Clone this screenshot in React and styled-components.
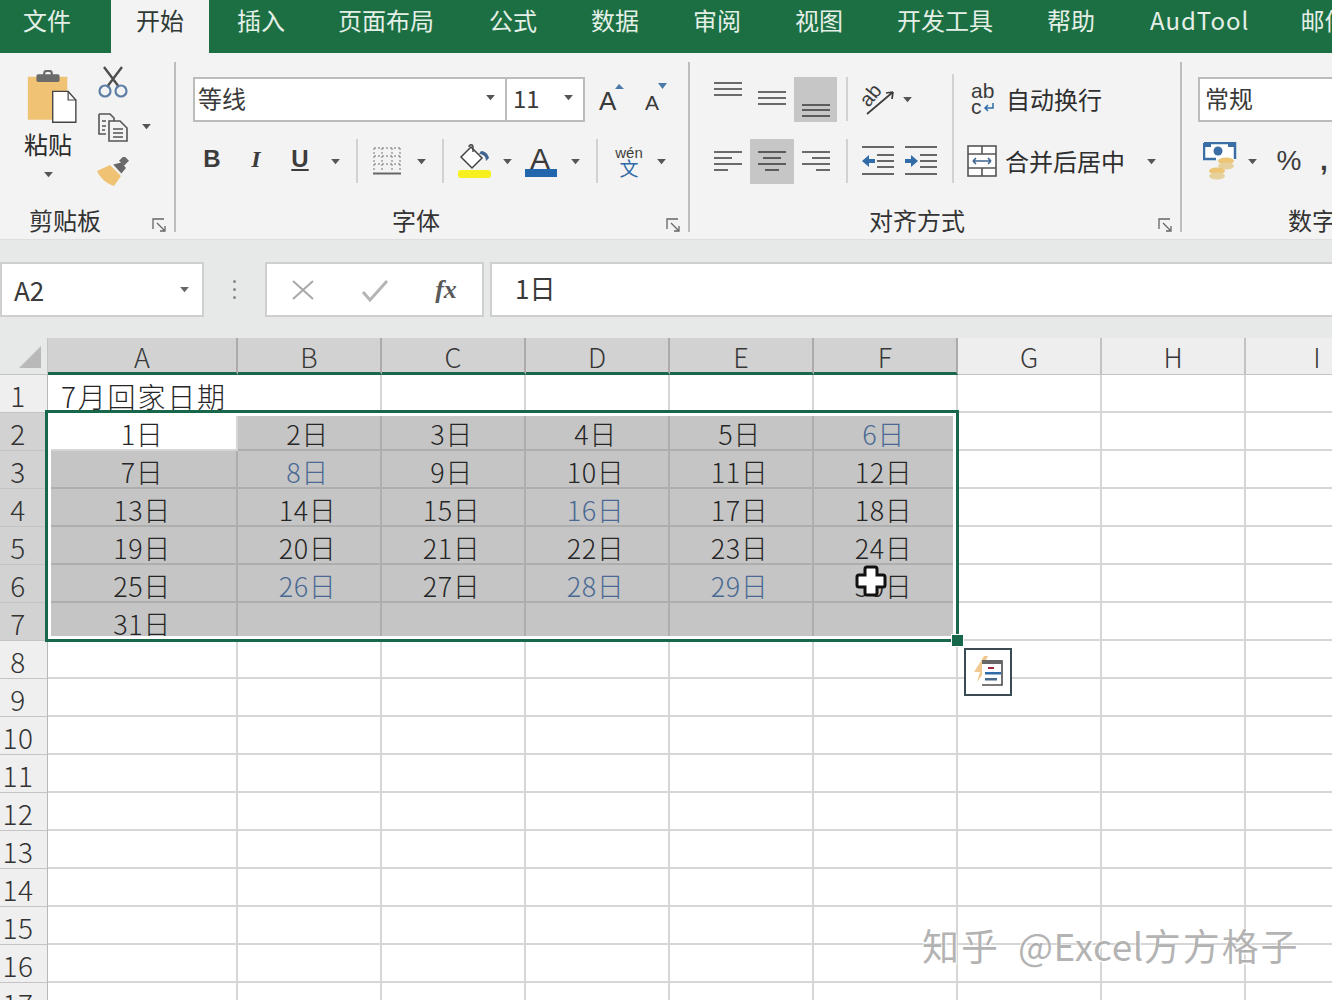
import React from "react";
import styled, { createGlobalStyle } from "styled-components";

const CJK = '"Noto Sans CJK SC", "Noto Sans", sans-serif';

const Global = createGlobalStyle`
  html, body { margin: 0; padding: 0; background: #fff; }
  body { font-family: ${CJK}; color: #2b2b2b; }
`;

const Page = styled.div`
  position: relative; width: 1332px; height: 1000px; overflow: hidden; background: #fff;
`;
const TabBar = styled.div`
  display: flex; height: 53px; background: #1c6f42; margin-left: -2px; gap: 3px; white-space: nowrap;
`;
const Tab = styled.div`
  flex: none; height: ${p => (p.$active ? "54px" : "53px")}; padding: 0 25px 14px; box-sizing: border-box;
  margin-right: ${p => p.$mr || 0}px;
  display: flex; align-items: center;
  font-size: 24px; line-height: 1; letter-spacing: ${p => p.$ls || 0}px;
  color: ${p => (p.$active ? "#2f3a35" : "#e4efe8")};
  background: ${p => (p.$active ? "#f3f3f3" : "transparent")};
`;
const Ribbon = styled.div`
  display: flex; align-items: flex-start; height: 187px; box-sizing: border-box; padding-top: 9px; background: #f3f3f3; overflow: hidden;
  box-shadow: inset 0 -1px 0 #dedede;
`;
const Group = styled.section`
  position: relative; flex: none; width: ${p => p.$w}px; height: 170px; box-sizing: border-box;
  border-right: ${p => (p.$open ? "none" : "2px solid #bdbdbd")};
  display: flex; flex-direction: column;
`;
const GroupBody = styled.div`
  display: flex; height: 122px; padding-left: ${p => p.$pl || 0}px;
`;
const Stack = styled.div`
  display: flex; flex-direction: column; padding-top: 14px; gap: 16px;
`;
const Row = styled.div`
  display: flex; align-items: center; height: 46px; margin-left: ${p => p.$ml || 0}px;
`;
const Slot = styled.div`
  flex: none; width: ${p => p.$w}px; height: ${p => p.$h || 45}px; display: flex; align-items: center; justify-content: center;
  background: ${p => (p.$on ? "#c6c6c6" : "transparent")};
  line-height: 1;
`;
const Divider = styled.div`
  flex: none; width: 2px; height: 44px; background: #d2d2d2; margin: 0 ${p => p.$m || 8}px;
`;
const TallDivider = styled.div`
  flex: none; width: 2px; height: 109px; margin: 12px 0 0 ${p => p.$ml || 0}px; background: #d2d2d2;
`;
const GroupLabel = styled.div`
  margin-top: 20px; height: 32px; line-height: 32px; text-align: center; font-size: 24px; color: #333; padding-right: ${p => p.$pr || 0}px;
  padding-left: ${p => p.$pl || 0}px; white-space: nowrap;
`;
const Launcher = styled.svg`
  position: absolute; right: 8px; top: 156px;
`;
const PasteColumn = styled.div`
  flex: none; width: 102px; padding-top: 8px; display: flex; flex-direction: column; align-items: center;
`;
const PasteLabel = styled.div`
  font-size: 24px; line-height: 28px; margin: 7px 6px 0 0; color: #2b2b2b;
`;
const CaretDrop = styled.div`
  height: 22px; margin: 7px 6px 0 0; display: flex; align-items: center;
`;
const SmallColumn = styled.div`
  flex: none; width: 68px; margin: -3px 0 0 -6px; display: flex; flex-direction: column;
`;
const SmallTool = styled.div`
  height: 46px; display: flex; align-items: center;
`;
const Select = styled.div`
  flex: none; width: ${p => p.$w}px; height: 45px; box-sizing: border-box; display: flex; align-items: center; justify-content: space-between;
  background: #fff; border: 2px solid #bcbcbc; padding: 0 9px 3px ${p => p.$pl || 4}px; font-size: 24px; color: #3a3a3a; line-height: 1;
  margin-left: ${p => p.$ml || 0}px; margin-right: ${p => p.$mr || 0}px;
`;
const FormatMark = styled.span`
  font-size: ${p => p.$size || 24}px; font-weight: ${p => p.$w || 700}; font-style: ${p => (p.$it ? "italic" : "normal")};
  text-decoration: ${p => (p.$ul ? "underline" : "none")}; color: ${p => p.$c || "#3c3c3c"};
  font-family: ${p => (p.$it ? '"Liberation Serif", serif' : '"Liberation Sans", sans-serif')};
  margin-bottom: ${p => p.$mb ?? 4}px;
`;
const ToolText = styled.span`
  font-size: 24px; color: #2f2f2f; white-space: nowrap; line-height: 1;
`;
const ToolRow = styled.div`
  display: flex; align-items: center; height: 46px; padding-left: ${p => p.$pl || 0}px; gap: ${p => p.$g || 0}px;
`;
const Band = styled.div`
  display: flex; align-items: flex-start; height: 98px; box-sizing: border-box; padding-top: 22px; background: #e7e8e8;
`;
const FormulaBox = styled.div`
  flex: none; width: ${p => p.$w}px; height: 55px; box-sizing: border-box; background: #fff; border: 2px solid #cfcfcf;
  margin-left: ${p => p.$ml || 0}px; display: flex; align-items: center; padding: ${p => p.$p || "0"};
  justify-content: ${p => p.$j || "flex-start"};
  font-size: 26px; color: #3a3a3a;
`;
const Dots = styled.div`
  flex: none; width: 3px; height: 3px; border-radius: 50%; background: #8a8a8a;
  box-shadow: 0 -8px 0 #8a8a8a, 0 8px 0 #8a8a8a; margin: 26px 29px 0 29px;
`;
const Sheet = styled.div`
  display: grid; grid-template-columns: 48px 190px repeat(8, 144px);
  grid-template-rows: 37px repeat(17, 38px); height: 662px; overflow: hidden;
  font-family: ${CJK};
`;
const Corner = styled.div`
  background: #e7e8e8; position: relative; border-right: 1px solid #c4c4c4; border-bottom: 1px solid #c4c4c4; box-sizing: border-box;
  display: flex; align-items: flex-end; justify-content: flex-end; padding: 0 6px 6px 0;
`;
const ColHead = styled.div`
  box-sizing: border-box; display: flex; align-items: flex-end; justify-content: center;
  background: ${p => (p.$sel ? "#d2d2d2" : "#eeeeee")};
  border-right: 2px solid ${p => (p.$sel ? "#ababab" : "#c2c2c2")};
  border-bottom: ${p => (p.$sel ? "3px solid #17684a" : "1px solid #c4c4c4")};
  font-size: 27px; line-height: 30px; color: #383838; font-weight: 300; padding-bottom: ${p => (p.$sel ? 0 : 2)}px;
`;
const RowHead = styled.div`
  box-sizing: border-box; display: flex; align-items: flex-end; justify-content: center;
  background: ${p => (p.$sel ? "#d2d2d2" : "#efefef")};
  border-right: 1px solid #b8b8b8; border-bottom: 1px solid #c4c4c4; padding: 0 11px 1px 0;
  font-size: 28px; line-height: 32px; letter-spacing: 0.5px; color: #333; font-weight: 300; overflow: hidden;
`;
const Cell = styled.div`
  box-sizing: border-box; display: flex; align-items: flex-end; justify-content: center; min-width: 0;
  background: ${p => (p.$sel ? "#c5c5c5" : "#fff")};
  border-right: 2px solid ${p => (p.$sel ? "#aeaeae" : "#d6d6d6")};
  border-bottom: 2px solid ${p => (p.$sel ? "#aeaeae" : "#d6d6d6")};
  font-size: 27px; line-height: 30px; letter-spacing: 0.5px; color: ${p => (p.$blue ? "#4a6a94" : "#262626")}; font-weight: 300; white-space: nowrap;
  padding-right: ${p => p.$pr || 0}px;
`;
const TitleCell = styled(Cell)`
  justify-content: flex-start; padding-left: 13px; overflow: visible; border-right-color: transparent; font-size: 28px; letter-spacing: 1.8px;
`;
const SelectionFrame = styled.div`
  position: absolute; left: 45px; top: 410px; width: 914px; height: 232px; box-sizing: border-box;
  border: 3px solid #17684a; box-shadow: inset 0 0 0 3px #fff; pointer-events: none;
`;
const FillHandle = styled.div`
  position: absolute; left: 951px; top: 634px; width: 11px; height: 11px; background: #17684a; border: 1px solid #fff;
`;
const SmartTag = styled.div`
  position: absolute; left: 964px; top: 648px; width: 48px; height: 48px; box-sizing: border-box; background: #fff; border: 2px solid #3c4a52;
  display: flex; align-items: center; justify-content: center;
`;
const CursorMark = styled.svg`
  position: absolute; left: 855px; top: 565px;
`;
const Watermark = styled.div`
  position: absolute; left: 922px; top: 921px; font-size: 37px; line-height: 48px; letter-spacing: 1.9px; word-spacing: 8px; white-space: nowrap;
  color: rgba(150,150,150,.72); text-shadow: 1px 2px 0 rgba(255,255,255,.85), -1px -1px 0 rgba(255,255,255,.5); font-family: ${CJK};
`;
const WatermarkHandle = styled.span`
  letter-spacing: 0.6px;
`;
const PhoneticMark = styled.div`
  display: flex; flex-direction: column; align-items: center; line-height: 1;
  font-family: "Liberation Sans", sans-serif; font-size: 15px; color: #3f3f3f;
  & > b { font-family: ${CJK}; font-weight: 400; font-size: 19px; color: #2e6aa8; margin-top: -2px; }
`;

const Caret = ({ c = "#555" }) => (
  <svg width="11" height="7" viewBox="0 0 12 8"><path d="M1 1h10L6 7z" fill={c} /></svg>
);
const PasteIcon = () => (
  <svg width="60" height="62" viewBox="0 0 60 62">
    <path d="M3 8h46v50H3z" fill="#efc274" />
    <rect x="13" y="5" width="27" height="9" rx="2" fill="#6b6b6b" />
    <rect x="22" y="1" width="9" height="8" rx="3" fill="none" stroke="#6b6b6b" strokeWidth="2.5" />
    <path d="M32 25h18l9 10v26H32z" fill="#fff" stroke="#444" strokeWidth="1.6" />
    <path d="M50 25v10h9" fill="none" stroke="#444" strokeWidth="1.4" />
  </svg>
);
const CutIcon = () => (
  <svg width="30" height="32" viewBox="0 0 30 32">
    <path d="M6 1l15 20M24 1L9 21" stroke="#4e4e4e" strokeWidth="2.4" fill="none" />
    <circle cx="7" cy="25" r="5.5" fill="none" stroke="#5d7ea6" strokeWidth="2.2" />
    <circle cx="23" cy="25" r="5.5" fill="none" stroke="#5d7ea6" strokeWidth="2.2" />
  </svg>
);
const CopyIcon = () => (
  <svg width="32" height="30" viewBox="0 0 32 30" fill="none" stroke="#555" strokeWidth="1.6">
    <path d="M2 2h11l4 4v3M2 2v20h7" />
    <path d="M5 9h4M5 14h4M5 18h3" />
    <path d="M12 9h11l7 7v13H12z" fill="#f3f3f3" />
    <path d="M16 17h10M16 21h10M16 25h10" />
  </svg>
);
const BrushIcon = () => (
  <svg width="32" height="30" viewBox="0 0 32 30">
    <path d="M0 14l13-6 11 11-7 10C10 27 3 21 0 14z" fill="#efc274" />
    <path d="M16 8l8-3 5 5-4 6z" fill="#666" transform="rotate(6 20 10)" />
    <rect x="24" y="0" width="7" height="7" fill="#6b6b6b" transform="rotate(45 27 3)" />
  </svg>
);
const GrowA = () => (
  <svg width="34" height="34" viewBox="0 0 34 34">
    <text x="9" y="28" fontFamily="Liberation Sans" fontSize="26" fill="#3a3a3a">A</text>
    <path d="M25 7l4-5 5 5z" fill="#4a7aa8" />
  </svg>
);
const ShrinkA = () => (
  <svg width="34" height="34" viewBox="0 0 34 34">
    <text x="12" y="28" fontFamily="Liberation Sans" fontSize="21" fill="#3a3a3a">A</text>
    <path d="M25 1h9l-4.500 6z" fill="#4a7aa8" />
  </svg>
);
const BorderIcon = () => (
  <svg width="28" height="28" viewBox="0 0 28 28" fill="none" stroke="#9a9a9a" strokeWidth="1.4" strokeDasharray="2 2">
    <path d="M1 1h26M1 9h26M1 17h26M1 1v24M9 1v24M19 1v24M27 1v24" />
    <path d="M0 26.500h28" stroke="#666" strokeWidth="2" strokeDasharray="none" />
  </svg>
);
const FillIcon = () => (
  <svg width="36" height="34" viewBox="0 0 36 34">
    <path d="M4 13L14 3l11 11-10 10z" fill="#fff" stroke="#444" strokeWidth="1.5" />
    <path d="M12 3c0-3 4-3 4 0v5" fill="none" stroke="#444" strokeWidth="1.4" />
    <path d="M24 7c4 0 7 3 8 7l-3 3c0-5-3-7-7-7z" fill="#3f648f" />
    <rect x="1" y="26" width="33" height="8" rx="3" fill="#f6f01e" />
  </svg>
);
const FontColorIcon = () => (
  <svg width="34" height="32" viewBox="0 0 34 32">
    <text x="6" y="24" fontFamily="Liberation Sans" fontSize="30" fill="#3b3b3b">A</text>
    <rect x="1" y="24" width="32" height="8" fill="#2266ad" />
  </svg>
);
const Lines = ({ w = 28, ys, widths, color = "#6a6a6a", align = "left" }) => (
  <svg width={w} height="45" viewBox={`0 0 ${w} 45`}>
    {ys.map((y, i) => {
      const l = widths ? widths[i] : w;
      const x = align === "left" ? 0 : align === "right" ? w - l : (w - l) / 2;
      return <rect key={y} x={x} y={y} width={l} height="2" fill={color} />;
    })}
  </svg>
);
const OrientIcon = () => (
  <svg width="36" height="34" viewBox="0 0 36 34">
    <text x="1" y="22" transform="rotate(-50 9 16)" fontFamily="Liberation Sans" fontSize="20" fill="#3c3c3c">ab</text>
    <path d="M7 32L33 10M33 10l-7 1M33 10l-1 7" stroke="#3c3c3c" strokeWidth="1.700" fill="none" />
  </svg>
);
const WrapIcon = () => (
  <svg width="26" height="32" viewBox="0 0 26 32">
    <text x="0" y="15" fontFamily="Liberation Sans" fontSize="21" fill="#3c3c3c">ab</text>
    <text x="0" y="31" fontFamily="Liberation Sans" fontSize="21" fill="#3c3c3c">c</text>
    <path d="M22 20v5h-7M17 22l-3 3 3 3" stroke="#2f6ca8" strokeWidth="1.500" fill="none" />
  </svg>
);
const IndentIcon = ({ out }) => (
  <svg width="34" height="30" viewBox="0 0 34 30">
    <path d="M1 1h32M16 9h17M16 15h17M16 21h17M1 28h32" stroke="#666" strokeWidth="1.800" />
    {out
      ? <path d="M1 15l7-6v4h6v4H8v4z" fill="#2f6ca8" />
      : <path d="M14 15l-7-6v4H1v4h6v4z" fill="#2f6ca8" />}
  </svg>
);
const MergeIcon = () => (
  <svg width="30" height="32" viewBox="0 0 30 32" fill="none" stroke="#555" strokeWidth="1.600">
    <rect x="1" y="1" width="28" height="30" fill="#fff" />
    <path d="M1 9h28M1 23h28M15 1v8M15 23v8" />
    <path d="M6 16h18M6 16l3-3M6 16l3 3M24 16l-3-3M24 16l-3 3" stroke="#3f648f" />
  </svg>
);
const MoneyIcon = () => (
  <svg width="34" height="38" viewBox="0 0 34 38">
    <rect x="1" y="1" width="31" height="16" fill="#fff" />
    <path d="M1 1h31v16M1 1v16h12" fill="none" stroke="#3a6ea5" strokeWidth="2.500" />
    <circle cx="15" cy="9" r="4.500" fill="#3a6ea5" />
    <rect x="1" y="0" width="7" height="5" fill="#3a6ea5" />
    <rect x="25" y="0" width="7" height="5" fill="#3a6ea5" />
    <ellipse cx="23" cy="19" rx="8" ry="3.500" fill="#ecc576" />
    <ellipse cx="23" cy="24" rx="8" ry="3.500" fill="#e6d19c" />
    <ellipse cx="14" cy="29" rx="8" ry="3.500" fill="#ecc576" />
    <ellipse cx="14" cy="34" rx="8" ry="3.500" fill="#e6d19c" />
  </svg>
);
const LaunchIcon = () => (
  <Launcher width="14" height="14" viewBox="0 0 14 14" fill="none" stroke="#666" strokeWidth="1.300">
    <path d="M1 11V1h11" />
    <path d="M5 5l7 7M8 13h5V8" />
  </Launcher>
);
const TagIcon = () => (
  <svg width="30" height="32" viewBox="0 0 30 32">
    <path d="M11 0L1 16h6l-3 10 12-16H10l5-10z" fill="#f0c890" />
    <path d="M9 5h20v24H9" fill="#fff" stroke="#4c4c4c" strokeWidth="1.600" />
    <rect x="9" y="4" width="20" height="4" fill="#666" />
    <rect x="15" y="11" width="6" height="2" fill="#a3243b" />
    <rect x="12" y="16" width="16" height="2.500" fill="#2f6ca8" />
    <rect x="12" y="22" width="12" height="2.500" fill="#4a6a8c" />
  </svg>
);

const tabs = [
  { t: "文件", mr: 12 }, { t: "开始", active: true }, { t: "插入" }, { t: "页面布局", mr: 2 }, { t: "公式", mr: 1 }, { t: "数据", mr: 1 },
  { t: "审阅", mr: 1 }, { t: "视图", mr: 1 }, { t: "开发工具", mr: 1 }, { t: "帮助", mr: 2 }, { t: "AudTool", ls: 1, mr: -2 }, { t: "邮件" },
];

const columns = ["A", "B", "C", "D", "E", "F", "G", "H", "I"];
const dayRows = [
  ["1日", "2日", "3日", "4日", "5日", "6日"],
  ["7日", "8日", "9日", "10日", "11日", "12日"],
  ["13日", "14日", "15日", "16日", "17日", "18日"],
  ["19日", "20日", "21日", "22日", "23日", "24日"],
  ["25日", "26日", "27日", "28日", "29日", "30日"],
  ["31日", "", "", "", "", ""],
];
const blue = new Set(["6日", "8日", "16日", "26日", "28日", "29日"]);

const SheetGrid = () => {
  const cells = [<Corner key="corner"><svg width="22" height="22" viewBox="0 0 22 22"><path d="M22 0v22H0z" fill="#b9b9b9" /></svg></Corner>];
  columns.forEach((c, i) => cells.push(<ColHead key={c} $sel={i < 6}>{c}</ColHead>));
  for (let r = 1; r <= 17; r++) {
    cells.push(<RowHead key={`h${r}`} $sel={r >= 2 && r <= 7}>{r}</RowHead>);
    for (let c = 0; c < 9; c++) {
      const key = `${r}-${c}`;
      if (r === 1 && c === 0) {
        cells.push(<TitleCell key={key}>7月回家日期</TitleCell>);
      } else if (r >= 2 && r <= 7 && c < 6) {
        const v = dayRows[r - 2][c];
        cells.push(
          <Cell key={key} $sel={!(r === 2 && c === 0)} $blue={blue.has(v)} $pr={c > 0 ? 3 : 0}>
            {v}
          </Cell>
        );
      } else {
        cells.push(<Cell key={key} />);
      }
    }
  }
  return <Sheet>{cells}</Sheet>;
};

export default function App() {
  return (
    <Page>
      <Global />
      <TabBar>
        {tabs.map(t => (
          <Tab key={t.t} $active={t.active} $mr={t.mr} $ls={t.ls}>{t.t}</Tab>
        ))}
      </TabBar>
      <Ribbon>
        <Group $w={176}>
          <GroupBody>
            <PasteColumn>
              <PasteIcon />
              <PasteLabel>粘贴</PasteLabel>
              <CaretDrop><Caret /></CaretDrop>
            </PasteColumn>
            <SmallColumn>
              <SmallTool><Slot $w={34}><CutIcon /></Slot></SmallTool>
              <SmallTool><Slot $w={34}><CopyIcon /></Slot><Slot $w={32}><Caret /></Slot></SmallTool>
              <SmallTool><Slot $w={34}><BrushIcon /></Slot></SmallTool>
            </SmallColumn>
          </GroupBody>
          <GroupLabel $pr={44}>剪贴板</GroupLabel>
          <LaunchIcon />
        </Group>
        <Group $w={514}>
          <GroupBody $pl={17}>
            <Stack>
              <Row>
                <Select $w={314} $pl={3}>等线<Caret /></Select>
                <Select $w={80} $ml={-2} $pl={6}>11<Caret /></Select>
                <Slot $w={44}><GrowA /></Slot>
                <Slot $w={42}><ShrinkA /></Slot>
              </Row>
              <Row $ml={-3}>
                <Slot $w={44}><FormatMark>B</FormatMark></Slot>
                <Slot $w={44}><FormatMark $it>I</FormatMark></Slot>
                <Slot $w={44}><FormatMark $ul>U</FormatMark></Slot>
                <Slot $w={26}><Caret /></Slot>
                <Divider />
                <Slot $w={42}><BorderIcon /></Slot>
                <Slot $w={26}><Caret /></Slot>
                <Divider />
                <Slot $w={46}><FillIcon /></Slot>
                <Slot $w={18}><Caret /></Slot>
                <Slot $w={50}><FontColorIcon /></Slot>
                <Slot $w={18}><Caret /></Slot>
                <Divider $m={12} />
                <Slot $w={38}><PhoneticMark>wén<b>文</b></PhoneticMark></Slot>
                <Slot $w={26}><Caret /></Slot>
              </Row>
            </Stack>
          </GroupBody>
          <GroupLabel $pr={32}>字体</GroupLabel>
          <LaunchIcon />
        </Group>
        <Group $w={492}>
          <GroupBody $pl={16}>
            <Stack>
              <Row>
                <Slot $w={44}><Lines ys={[5, 11, 17]} /></Slot>
                <Slot $w={44}><Lines ys={[14, 20, 26]} /></Slot>
                <Slot $w={43} $on><Lines ys={[27, 32, 38]} color="#5c5c5c" /></Slot>
                <Divider $m={9} />
                <Slot $w={42}><OrientIcon /></Slot>
                <Slot $w={16}><Caret /></Slot>
              </Row>
              <Row>
                <Slot $w={44}><Lines ys={[12, 18, 24, 30]} widths={[28, 18, 28, 14]} /></Slot>
                <Slot $w={44} $on><Lines ys={[12, 18, 24, 30]} widths={[28, 18, 28, 14]} align="center" color="#5c5c5c" /></Slot>
                <Slot $w={43}><Lines ys={[12, 18, 24, 30]} widths={[28, 18, 28, 14]} align="right" /></Slot>
                <Divider $m={9} />
                <Slot $w={42}><IndentIcon out /></Slot>
                <Slot $w={44}><IndentIcon /></Slot>
              </Row>
            </Stack>
            <TallDivider $ml={9} />
            <Stack>
              <ToolRow $pl={17} $g={9}><WrapIcon /><ToolText>自动换行</ToolText></ToolRow>
              <ToolRow $pl={13} $g={8}><MergeIcon /><ToolText>合并后居中</ToolText><Slot $w={36}><Caret /></Slot></ToolRow>
            </Stack>
          </GroupBody>
          <GroupLabel $pr={36}>对齐方式</GroupLabel>
          <LaunchIcon />
        </Group>
        <Group $w={150} $open>
          <GroupBody $pl={16}>
            <Stack>
              <Row><Select $w={160} $pl={5}>常规</Select></Row>
              <Row>
                <Slot $w={44}><MoneyIcon /></Slot>
                <Slot $w={20}><Caret /></Slot>
                <Slot $w={54}><FormatMark $size={28} $w={400} $mb={0}>%</FormatMark></Slot>
                <Slot $w={16}><FormatMark $size={28} $mb={0}>,</FormatMark></Slot>
              </Row>
            </Stack>
          </GroupBody>
          <GroupLabel $pl={106}>数字</GroupLabel>
        </Group>
      </Ribbon>
      <Band>
        <FormulaBox $w={204} $p="0 12px" $j="space-between">A2<Caret c="#666" /></FormulaBox>
        <Dots />
        <FormulaBox $w={219}>
          <Slot $w={72}><svg width="24" height="24" viewBox="0 0 24 24"><path d="M2 3l20 18M22 3L2 21" stroke="#a8a8a8" strokeWidth="2" /></svg></Slot>
          <Slot $w={72}><svg width="28" height="24" viewBox="0 0 28 24"><path d="M2 14l7 8L26 3" stroke="#b5b5b5" strokeWidth="3" fill="none" /></svg></Slot>
          <Slot $w={70}><FormatMark $it $size={26} $c="#5a5a5a" $mb={0}>fx</FormatMark></Slot>
        </FormulaBox>
        <FormulaBox $w={860} $ml={6} $p="0 0 5px 23px">1日</FormulaBox>
      </Band>
      <SheetGrid />
      <SelectionFrame />
      <FillHandle />
      <SmartTag><TagIcon /></SmartTag>
      <CursorMark width="32" height="32" viewBox="0 0 32 32">
        <path d="M10 4q0-2 2-2h8q2 0 2 2v6h6q2 0 2 2v8q0 2-2 2h-6v6q0 2-2 2h-8q-2 0-2-2v-6H4q-2 0-2-2v-8q0-2 2-2h6z" fill="#fff" stroke="#111" strokeWidth="3" />
      </CursorMark>
      <Watermark>知乎 <WatermarkHandle>@Excel</WatermarkHandle>方方格子</Watermark>
    </Page>
  );
}
